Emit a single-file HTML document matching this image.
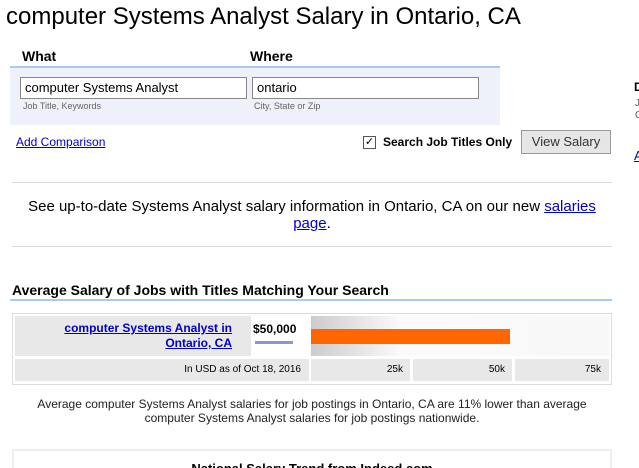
<!DOCTYPE html>
<html><head><style>
html,body{margin:0;width:639px;height:468px;overflow:hidden;background:#fff;font-family:"Liberation Sans",Arial,sans-serif;position:relative;color:#000}
.a{position:absolute;white-space:nowrap}
a{color:#00c;text-decoration:underline}
</style></head><body>
<div class="a" style="left:6px;top:3px;font-size:24px">computer Systems Analyst Salary in Ontario, CA</div>
<div class="a" style="left:22px;top:48px;font-size:14px;font-weight:bold">What</div>
<div class="a" style="left:250px;top:48px;font-size:14px;font-weight:bold">Where</div>
<div class="a" style="left:10px;top:66px;width:490px;height:57px;background:#eef1f9;border-top:2px solid #a9cbee"></div>
<div class="a" style="left:20px;top:77px;width:221px;height:20px;border:1px solid #888;background:#fff;font-size:13px;line-height:20px;padding-left:4px">computer Systems Analyst</div>
<div class="a" style="left:252px;top:77px;width:221px;height:20px;border:1px solid #888;background:#fff;font-size:13px;line-height:20px;padding-left:4px">ontario</div>
<div class="a" style="left:23px;top:101px;font-size:9px;color:#666">Job Title, Keywords</div>
<div class="a" style="left:254px;top:101px;font-size:9px;color:#666">City, State or Zip</div>
<div class="a" style="left:16px;top:135px;font-size:12px"><a>Add Comparison</a></div>
<div class="a" style="left:363px;top:136px;width:11px;height:11px;border:1px solid #555;font-size:11px;line-height:11px;text-align:center">✓</div>
<div class="a" style="left:383px;top:135px;font-size:12px;font-weight:bold">Search Job Titles Only</div>
<div class="a" style="left:521px;top:130px;width:88px;height:22px;border:1px solid #999;background:#e6e6e6;font-size:13px;line-height:22px;text-align:center;color:#333">View Salary</div>
<div class="a" style="left:634px;top:80px;font-size:12px;font-weight:bold">D</div>
<div class="a" style="left:635px;top:98px;font-size:10px;color:#555;line-height:12px">J<br>C</div>
<div class="a" style="left:634px;top:148px;font-size:13px"><a>A</a></div>
<div class="a" style="left:12px;top:182px;width:600px;height:1px;background:#ddd"></div>
<div class="a" style="left:12px;top:198px;width:600px;text-align:center;font-size:15px;white-space:normal;line-height:17px">See up-to-date Systems Analyst salary information in Ontario, CA on our new <a>salaries</a><br><a>page</a>.</div>
<div class="a" style="left:12px;top:246px;width:600px;height:1px;background:#ddd"></div>
<div class="a" style="left:12px;top:282px;font-size:14px;font-weight:bold">Average Salary of Jobs with Titles Matching Your Search</div>
<div class="a" style="left:10px;top:299px;width:602px;height:2px;background:#a9cbee"></div>
<div class="a" style="left:12px;top:313px;width:598px;height:70px;border:1px solid #ddd;background:#fff"></div>
<div class="a" style="left:15px;top:316px;width:236px;height:40px;background:#e8e8e8"></div>
<div class="a" style="left:20px;top:321px;width:212px;text-align:right;font-size:12px;font-weight:bold;line-height:15px"><a>computer Systems Analyst in<br>Ontario, CA</a></div>
<div class="a" style="left:253px;top:322px;font-size:12px;font-weight:bold">$50,000</div>
<div class="a" style="left:255px;top:341px;width:38px;height:3px;background:#8899cc"></div>
<div class="a" style="left:311px;top:316px;width:298px;height:40px;background:linear-gradient(90deg,#ccc,#fafafa 30%,#f8f8f8)"></div>
<div class="a" style="left:311px;top:329px;width:199px;height:15px;background:#f60"></div>
<div class="a" style="left:15px;top:359px;width:294px;height:22px;background:#e8e8e8;font-size:10px;line-height:22px;text-align:right;box-sizing:border-box;padding-right:8px">In USD as of Oct 18, 2016</div>
<div class="a" style="left:311px;top:359px;width:99px;height:22px;background:#e8e8e8;font-size:10px;line-height:22px;text-align:right;box-sizing:border-box;padding-right:7px">25k</div>
<div class="a" style="left:413px;top:359px;width:99px;height:22px;background:#e8e8e8;font-size:10px;line-height:22px;text-align:right;box-sizing:border-box;padding-right:7px">50k</div>
<div class="a" style="left:515px;top:359px;width:94px;height:22px;background:#e8e8e8;font-size:10px;line-height:22px;text-align:right;box-sizing:border-box;padding-right:8px">75k</div>
<div class="a" style="left:12px;top:397px;width:600px;text-align:center;font-size:12px;line-height:14px;color:#222">Average computer Systems Analyst salaries for job postings in Ontario, CA are 11% lower than average<br>computer Systems Analyst salaries for job postings nationwide.</div>
<div class="a" style="left:12px;top:449px;width:596px;height:40px;border:2px solid #eee"></div>
<div class="a" style="left:12px;top:461px;width:600px;text-align:center;font-size:13px;font-weight:bold">National Salary Trend from Indeed.com</div>
</body></html>
